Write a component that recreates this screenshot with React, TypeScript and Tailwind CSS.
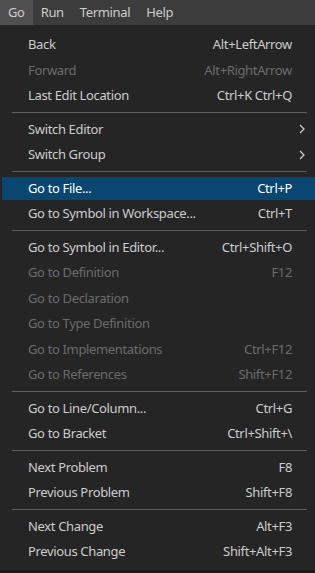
import React from "react";

type Item =
  | { type: "sep" }
  | { type: "item"; label: string; key?: string; disabled?: boolean; active?: boolean; sub?: boolean };

const items: Item[] = [
  { type: "item", label: "Back", key: "Alt+LeftArrow" },
  { type: "item", label: "Forward", key: "Alt+RightArrow", disabled: true },
  { type: "item", label: "Last Edit Location", key: "Ctrl+K Ctrl+Q" },
  { type: "sep" },
  { type: "item", label: "Switch Editor", sub: true },
  { type: "item", label: "Switch Group", sub: true },
  { type: "sep" },
  { type: "item", label: "Go to File...", key: "Ctrl+P", active: true },
  { type: "item", label: "Go to Symbol in Workspace...", key: "Ctrl+T" },
  { type: "sep" },
  { type: "item", label: "Go to Symbol in Editor...", key: "Ctrl+Shift+O" },
  { type: "item", label: "Go to Definition", key: "F12", disabled: true },
  { type: "item", label: "Go to Declaration", disabled: true },
  { type: "item", label: "Go to Type Definition", disabled: true },
  { type: "item", label: "Go to Implementations", key: "Ctrl+F12", disabled: true },
  { type: "item", label: "Go to References", key: "Shift+F12", disabled: true },
  { type: "sep" },
  { type: "item", label: "Go to Line/Column...", key: "Ctrl+G" },
  { type: "item", label: "Go to Bracket", key: "Ctrl+Shift+\\" },
  { type: "sep" },
  { type: "item", label: "Next Problem", key: "F8" },
  { type: "item", label: "Previous Problem", key: "Shift+F8" },
  { type: "sep" },
  { type: "item", label: "Next Change", key: "Alt+F3" },
  { type: "item", label: "Previous Change", key: "Shift+Alt+F3" },
];

function Chevron() {
  return (
    <svg width="6" height="10" viewBox="0 0 6 10" className="block">
      <polyline points="1,1 5,5 1,9" fill="none" stroke="#cccccc" strokeWidth="1.3" />
    </svg>
  );
}

export default function App() {
  return (
    <div
      className="w-[315px] h-[573px] bg-[#1b1b1c] text-[13px] tracking-[-0.35px] text-[#cccccc] flex flex-col overflow-hidden"
      style={{ fontFamily: '"Noto Sans", "Open Sans", sans-serif' }}
    >
      <div className="h-[25px] shrink-0 bg-[#3c3c3c] flex items-stretch">
        <div className="px-2 flex items-center bg-[#505050]">Go</div>
        <div className="px-2 flex items-center">Run</div>
        <div className="px-2 flex items-center">Terminal</div>
        <div className="px-2 flex items-center">Help</div>
      </div>
      <div className="bg-[#252526] pt-[7px] pb-[7px] h-[545px] shrink-0">
        {items.map((it, i) =>
          it.type === "sep" ? (
            <div key={i} className="h-[8px] flex items-center pl-[12px] pr-[8px]">
              <div className="h-px w-full bg-[#5f5f5f]" />
            </div>
          ) : (
            <div key={i} className="h-[25.5px] flex items-center pl-[2px]">
              <div
                className={
                  "h-[23px] w-full flex items-center pl-[26px] pr-[23px] " +
                  (it.active ? "bg-[#094771] text-[#ffffff]" : "") +
                  (it.disabled ? " text-[#6b6b6c]" : "")
                }
              >
                <span className="flex-1 whitespace-nowrap">{it.label}</span>
                {it.key && <span className="whitespace-nowrap">{it.key}</span>}
                {it.sub && (
                  <span className="-mr-[13px]">
                    <Chevron />
                  </span>
                )}
              </div>
            </div>
          )
        )}
      </div>
    </div>
  );
}
